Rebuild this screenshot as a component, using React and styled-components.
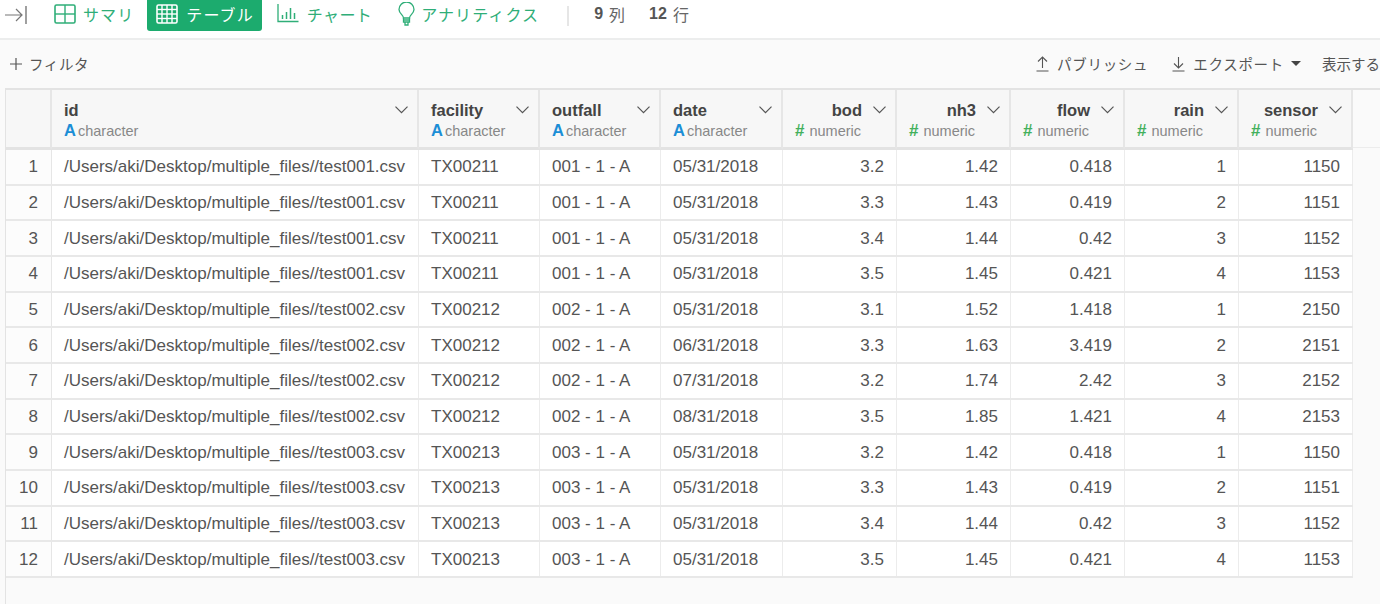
import React from "react";
import styled, { createGlobalStyle } from "styled-components";

const Global = createGlobalStyle`
  html, body { margin: 0; padding: 0; height: 100%; background: #fafafa; overflow: hidden; }
  body { font-family: "Liberation Sans", "Noto Sans CJK JP", sans-serif; color: #444; }
  * { box-sizing: border-box; }
`;
const Page = styled.div`width: 1380px; height: 604px; overflow: hidden; display: flex; flex-direction: column;`;
const TopBar = styled.div`
  height: 40px; background: #fff; border-bottom: 2px solid #eceded; display: flex; align-items: flex-start;
  padding-left: 5px; flex: none;
`;
const Collapse = styled.svg`width: 24px; height: 18px; margin-top: 6px; margin-right: 25px; flex: none;`;
const Tab = styled.div`
  height: 31px; display: flex; align-items: center; gap: ${p => p.$gap ?? 7}px; padding: 0 ${p => p.$pad ?? 0}px 4px ${p => p.$padL ?? 0}px;
  margin-right: ${p => p.$mr ?? 0}px; border-radius: 0 0 3px 3px;
  background: ${p => p.$active ? "#1cab6e" : "transparent"};
  color: ${p => p.$active ? "#fff" : "#2fae78"};
  font-size: 16px; letter-spacing: ${p => p.$ls ?? 1.1}px; white-space: nowrap;
`;
const Divider = styled.div`width: 2px; height: 20px; background: #e6e6e6; margin: 6px 25px 0 28px;`;
const Count = styled.div`
  height: 31px; display: flex; align-items: center; gap: 6px; margin-right: 24px; font-size: 16px; padding-bottom: 3px; color: #666;
  b { color: #555; }
`;
const ActionBar = styled.div`
  height: 48px; flex: none; display: flex; align-items: center; font-size: 14.5px; color: #555; padding: 0 0 1px 10px; white-space: nowrap;
`;
const Filter = styled.div`display: flex; align-items: center; gap: 7px; letter-spacing: .6px; margin-right: auto;`;
const Action = styled.div`display: flex; align-items: center; gap: 8px; margin-right: ${p => p.$mr ?? 0}px; letter-spacing: ${p => p.$ls ?? 0.7}px;`;
const Caret = styled.span`width: 0; height: 0; border: 5px solid transparent; border-top: 5px solid #444; border-bottom: 0; margin-left: -1px;`;
const TableArea = styled.div`margin-left: 5px; flex: 1; border-top: 2px solid #e3e3e3; border-left: 1px solid #e3e3e3;`;
const COLS = "46px 367px 121px 121px 122px 114px 114px 114px 114px 114px";
const HeadRow = styled.div`
  display: grid; grid-template-columns: ${COLS} 1fr; height: 60px;
`;
const HeadCell = styled.div`
  background: #f7f7f7; border-right: 2px solid #e6e6e6; border-bottom: 3px solid #e3e3e3; padding: 9px 9px 0 12px; min-width: 0; display: flex; flex-direction: column; gap: 0;
`;
const HeadFiller = styled.div`border-bottom: 1px solid #ececec; margin-bottom: 2px;`;
const HeadTop = styled.div`display: flex; align-items: center; justify-content: ${p => p.$right ? "flex-end" : "space-between"}; gap: 11px; height: 22px;`;
const Name = styled.div`font-size: 16.5px; font-weight: 700; color: #444;`;
const Chevron = styled.svg`width: 13px; height: 8px; flex: none;`;
const TypeLine = styled.div`display: flex; align-items: center; gap: ${p => p.$num ? 5 : 2}px; font-size: 14.5px; color: #888; height: 19px;`;
const TypeIcon = styled.span`font-weight: 700; font-size: ${p => p.$num ? 17 : 16.5}px; color: ${p => p.$num ? "#43b05c" : "#1b8ed6"};`;
const Row = styled.div`
  display: grid; grid-template-columns: ${COLS}; width: 1347px; height: 35.67px; background: #fff; border-bottom: 2px solid #e8e8e8;
`;
const Cell = styled.div`
  border-right: 1px solid #ececec; display: flex; align-items: center; padding: 1px 12px 0; font-size: 17px; color: #555; white-space: nowrap; overflow: hidden;
  justify-content: ${p => p.$right ? "flex-end" : "flex-start"};
`;
const IndexCell = styled(Cell)`background: #fcfcfc; padding: 1px 13px 0 0; border-right: 1px solid #e6e6e6;`;

const ICON = { fill: "none", stroke: "#2fae78", strokeWidth: 1.3 };
const GridIcon = ({ n, white }) => {
  const c = white ? "#fff" : "#2fae78";
  const lines = [];
  for (let i = 1; i < n; i++) {
    lines.push(<line key={"v"+i} x1={1 + 20*i/n} y1="1" x2={1 + 20*i/n} y2="19" stroke={c} strokeWidth="1.4" />);
    lines.push(<line key={"h"+i} x1="1" y1={1 + 18*i/n} x2="21" y2={1 + 18*i/n} stroke={c} strokeWidth="1.4" />);
  }
  return <svg width="22" height="20" viewBox="0 0 22 20" style={{ flex: "none" }}>
    <rect x="1" y="1" width="20" height="18" rx="1.5" fill="none" stroke={c} strokeWidth="1.6" />
    {lines}
  </svg>;
};
const ChartIcon = () => (
  <svg width="22" height="19" viewBox="0 0 22 19" style={{ flex: "none" }}>
    <path d="M1 0v17.5h20.500" {...ICON} />
    <path d="M5.500 11v4M9.500 8v7M13.500 4v11M17.500 9v6" {...ICON} strokeWidth="1.5" />
  </svg>
);
const BulbIcon = () => (
  <svg width="17" height="24" viewBox="0 0 17 24" style={{ flex: "none" }}>
    <path d="M5.500 16c0-3-4.500-4.500-4.500-8.500a7.500 7.500 0 0 1 15 0c0 4-4.500 5.500-4.500 8.500z" {...ICON} />
    <path d="M5.500 16v4h6v-4M5.500 18h6M7 20v3h3v-3" {...ICON} />
  </svg>
);
const Down = () => <Chevron viewBox="0 0 13 8"><path d="M.5.7l6 6 6-6" fill="none" stroke="#555" strokeWidth="1.2" /></Chevron>;

const columns = [
  ["id", 0], ["facility", 0], ["outfall", 0], ["date", 0],
  ["bod", 1], ["nh3", 1], ["flow", 1], ["rain", 1], ["sensor", 1],
];
const p = n => `/Users/aki/Desktop/multiple_files//test00${n}.csv`;
const rows = [
  [p(1),"TX00211","001 - 1 - A","05/31/2018","3.2","1.42","0.418","1","1150"],
  [p(1),"TX00211","001 - 1 - A","05/31/2018","3.3","1.43","0.419","2","1151"],
  [p(1),"TX00211","001 - 1 - A","05/31/2018","3.4","1.44","0.42","3","1152"],
  [p(1),"TX00211","001 - 1 - A","05/31/2018","3.5","1.45","0.421","4","1153"],
  [p(2),"TX00212","002 - 1 - A","05/31/2018","3.1","1.52","1.418","1","2150"],
  [p(2),"TX00212","002 - 1 - A","06/31/2018","3.3","1.63","3.419","2","2151"],
  [p(2),"TX00212","002 - 1 - A","07/31/2018","3.2","1.74","2.42","3","2152"],
  [p(2),"TX00212","002 - 1 - A","08/31/2018","3.5","1.85","1.421","4","2153"],
  [p(3),"TX00213","003 - 1 - A","05/31/2018","3.2","1.42","0.418","1","1150"],
  [p(3),"TX00213","003 - 1 - A","05/31/2018","3.3","1.43","0.419","2","1151"],
  [p(3),"TX00213","003 - 1 - A","05/31/2018","3.4","1.44","0.42","3","1152"],
  [p(3),"TX00213","003 - 1 - A","05/31/2018","3.5","1.45","0.421","4","1153"],
];

export default function App() {
  return (
    <Page>
      <Global />
      <TopBar>
        <Collapse viewBox="0 0 24 18"><path d="M0 9h17M11 3l6 6-6 6" fill="none" stroke="#777" strokeWidth="1.2" /><path d="M21 0v18" stroke="#777" strokeWidth="1.4" /></Collapse>
        <Tab $mr={13}><GridIcon n={2} />サマリ</Tab>
        <Tab $active $padL={9} $pad={8} $gap={8} $mr={15}><GridIcon n={4} white />テーブル</Tab>
        <Tab $gap={8} $mr={26} $ls={0.4}><ChartIcon />チャート</Tab>
        <Tab $gap={6}><BulbIcon />アナリティクス</Tab>
        <Divider />
        <Count><b>9</b>列</Count>
        <Count><b>12</b>行</Count>
      </TopBar>
      <ActionBar>
        <Filter>
          <svg width="12" height="12" viewBox="0 0 12 12"><path d="M6 0v12M0 6h12" stroke="#555" strokeWidth="1.2" /></svg>
          フィルタ
        </Filter>
        <Action $mr={24}>
          <svg width="13" height="16" viewBox="0 0 13 16"><path d="M6.500 12V1M2 5.500L6.500 1 11 5.500M0.500 15h12" fill="none" stroke="#555" strokeWidth="1.1" /></svg>
          パブリッシュ
        </Action>
        <Action $mr={21}>
          <svg width="13" height="16" viewBox="0 0 13 16"><path d="M6.500 1v11M2 7.500L6.500 12 11 7.500M0.500 15h12" fill="none" stroke="#555" strokeWidth="1.1" /></svg>
          エクスポート
          <Caret />
        </Action>
        <Action $ls={0}>表示する</Action>
      </ActionBar>
      <TableArea>
        <HeadRow>
          <HeadCell />
          {columns.map(([name, num]) => (
            <HeadCell key={name}>
              <HeadTop $right={num}><Name>{name}</Name><Down /></HeadTop>
              <TypeLine $num={num}>
                <TypeIcon $num={num}>{num ? "#" : "A"}</TypeIcon>{num ? "numeric" : "character"}
              </TypeLine>
            </HeadCell>
          ))}
          <HeadFiller />
        </HeadRow>
        {rows.map((r, i) => (
          <Row key={i}>
            <IndexCell $right>{i + 1}</IndexCell>
            {r.map((v, j) => <Cell key={j} $right={j >= 4}>{v}</Cell>)}
          </Row>
        ))}
      </TableArea>
    </Page>
  );
}
